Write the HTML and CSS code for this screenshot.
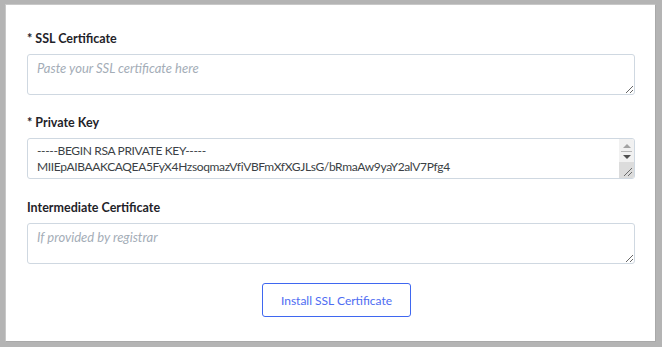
FILE: index.html
```html
<!DOCTYPE html>
<html lang="en">
<head>
  <meta charset="UTF-8">
  <meta name="viewport" content="width=device-width, initial-scale=1.0">
  <link rel="stylesheet" href="styles.css">
</head>
<body>
  <div class="card">
    <form class="ssl-form">
      <div class="field">
        <label for="cert">* SSL Certificate</label>
        <textarea id="cert" placeholder="Paste your SSL certificate here"></textarea>
      </div>
      <div class="field">
        <label for="key">* Private Key</label>
        <div class="key-box">
          <textarea id="key" class="key-text">-----BEGIN RSA PRIVATE KEY-----
MIIEpAIBAAKCAQEA5FyX4HzsoqmazVfiVBFmXfXGJLsG/bRmaAw9yaY2alV7Pfg4
kq8dHc3Tn0Zs1WbX9uYQ7pLmVa2rJc4eF6hGiKlOpQ3sTuVwXyZ0aBcDeFgHiJkL
mNoPqRsTuVwXyZ1aBcDeFgHiJkLmNoPqRsTuVwXyZ2aBcDeFgHiJkLmNoPqRsTuV
-----END RSA PRIVATE KEY-----</textarea>
          <div class="fake-bar">
            <span class="arrow up"></span>
            <span class="track"><i></i></span>
            <span class="arrow down"></span>
            <span class="corner">
              <svg width="15" height="16" viewBox="0 0 15 16">
                <line x1="5" y1="14" x2="13" y2="6" stroke="#6b6b6b" stroke-width="1"/>
                <line x1="9" y1="14" x2="13" y2="10" stroke="#6b6b6b" stroke-width="1"/>
              </svg>
            </span>
          </div>
        </div>
      </div>
      <div class="field">
        <label for="chain">Intermediate Certificate</label>
        <textarea id="chain" placeholder="If provided by registrar"></textarea>
      </div>
      <div class="actions">
        <button type="button" class="btn">Install SSL Certificate</button>
      </div>
    </form>
  </div>
</body>
</html>
```

FILE: styles.css
```css
html, body {
  margin: 0;
  height: 100%;
}

body {
  background: #b4b4b4;
  padding: 4px 6px 5px 5px;
  box-sizing: border-box;
  font-family: Lato, "Liberation Sans", sans-serif;
  font-size: 13px;
  color: #222;
}

.card {
  background: #fff;
  border: 1px solid #a9a9a9;
  border-top-color: #c8c8c8;
  border-left-color: #c8c8c8;
  height: 100%;
  box-sizing: border-box;
  padding: 25px 20px 0 21px;
}

.field {
  margin-bottom: 20px;
}

.field:first-child {
  margin-bottom: 19px;
}

.field label {
  display: block;
  font-weight: bold;
  font-size: 12.5px;
  line-height: 18px;
  margin-bottom: 6px;
  color: #1f2329;
}

.field textarea {
  display: block;
  width: 100%;
  height: 41px;
  box-sizing: border-box;
  border: 1px solid #cfd8e1;
  border-radius: 3px;
  padding: 5px 9px 0;
  font-family: inherit;
  font-size: 12px;
  line-height: 16px;
  color: #3b3f45;
  resize: vertical;
}

.field textarea::placeholder {
  color: #a4adb7;
  font-style: italic;
  font-size: 13px;
}

.key-box {
  position: relative;
}

.key-text {
  letter-spacing: -0.35px;
  overflow: hidden;
  padding-top: 4px !important;
  padding-right: 24px !important;
}

/* drawn scrollbar, the headless browser hides the real one */
.fake-bar {
  position: absolute;
  top: 1px;
  right: 1px;
  bottom: 1px;
  width: 15px;
  display: flex;
  flex-direction: column;
  background: #f1f1f1;
  border-radius: 0 2px 2px 0;
  overflow: hidden;
}

.arrow {
  height: 10px;
  display: flex;
  align-items: center;
  justify-content: center;
}

.arrow::before {
  content: "";
  border-left: 4px solid transparent;
  border-right: 4px solid transparent;
}

.arrow.up::before {
  border-bottom: 4px solid #a3a3a3;
  margin-top: 3px;
}

.arrow.down::before {
  border-top: 4px solid #505050;
  margin-bottom: 1px;
}

.track {
  height: 4px;
  display: flex;
  align-items: center;
  justify-content: center;
}

.track i {
  width: 11px;
  height: 1px;
  background: #b8b8b8;
}

.arrow.down {
  height: 9px;
}

.corner {
  flex: 1;
  background: #dcdcdc;
  display: flex;
  align-items: flex-end;
}

.actions {
  display: flex;
  justify-content: center;
  margin-top: -1px;
  padding-left: 11px;
}

.btn {
  width: 149px;
  height: 34px;
  background: #fff;
  border: 1px solid #3f67f0;
  border-radius: 3px;
  color: #4e6cf2;
  font-family: inherit;
  font-size: 12px;
}
```
